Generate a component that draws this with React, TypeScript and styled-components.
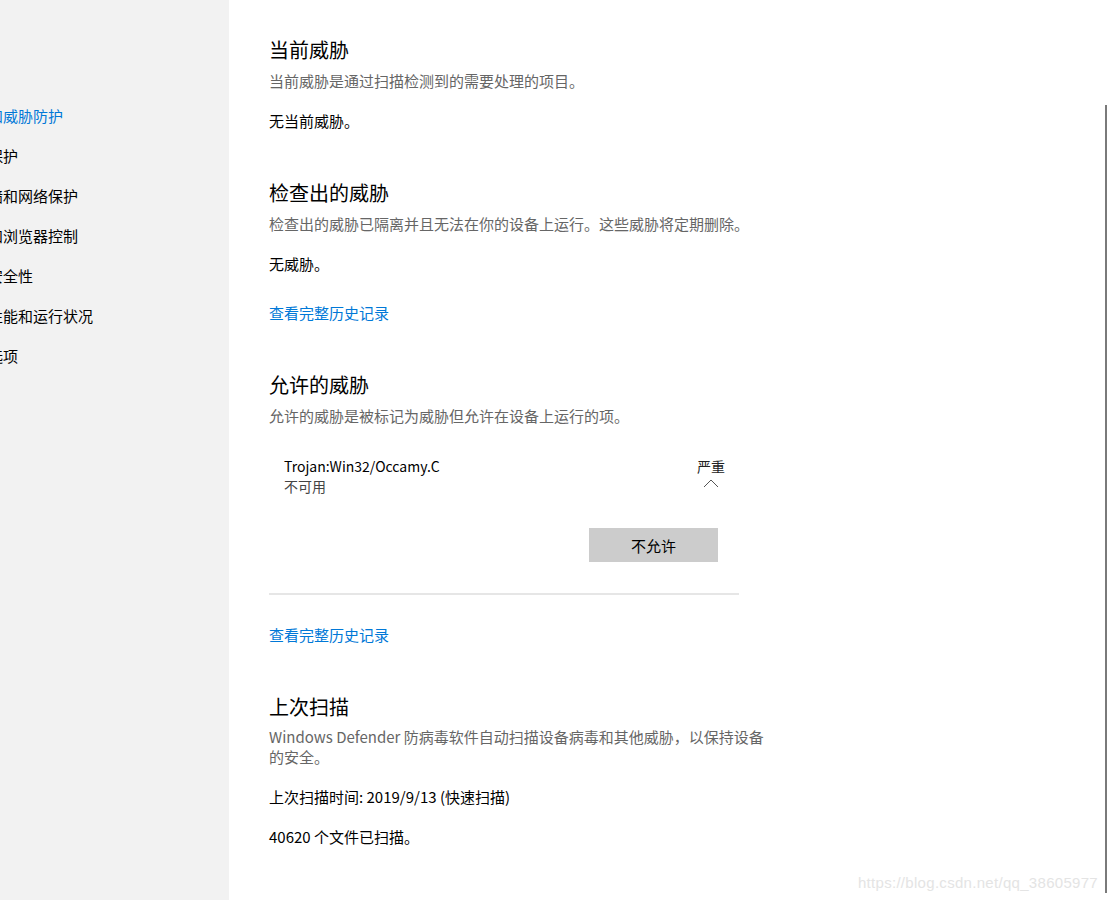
import React from 'react';
import styled, { createGlobalStyle } from 'styled-components';

const GlobalStyle = createGlobalStyle`
  html, body {
    margin: 0;
    padding: 0;
    background: #ffffff;
  }
  body {
    font-family: "Noto Sans CJK SC", "Noto Sans", sans-serif;
    color: #000;
  }
`;

const Page = styled.div`
  display: flex;
  height: 900px;
  overflow: hidden;
`;

// left nav is scrolled sideways in the shot, so labels run off the left edge
const Sidebar = styled.nav`
  width: 229px;
  flex-shrink: 0;
  background: #f2f2f2;
  padding-top: 106px;
  overflow: hidden;
  display: flex;
  flex-direction: column;
`;

const NavItem = styled.div<{ $active?: boolean }>`
  height: 40px;
  line-height: 20px;
  margin-left: -42px;
  white-space: nowrap;
  font-size: 15px;
  color: ${p => (p.$active ? '#0078d7' : '#000')};
`;

const Main = styled.main`
  position: relative;
  flex: 1;
  padding: 36px 0 0 40px;
`;

const Section = styled.section`
  display: flex;
  flex-direction: column;
  width: 500px;
  & + & {
    margin-top: 48px;
  }
`;

const Heading = styled.h2`
  margin: 0;
  font-size: 20px;
  line-height: 28px;
  font-weight: 400;
`;

const Desc = styled.p<{ $gap?: number }>`
  margin: ${p => p.$gap ?? 7}px 0 0;
  font-size: 15px;
  line-height: 20px;
  color: #666;
`;

const Body = styled.p<{ $gap?: number }>`
  margin: ${p => p.$gap ?? 20}px 0 0;
  font-size: 15px;
  line-height: 20px;
`;

const Link = styled.a<{ $gap?: number }>`
  margin-top: ${p => p.$gap ?? 29}px;
  font-size: 15px;
  line-height: 20px;
  color: #0078d7;
  text-decoration: none;
  align-self: flex-start;
  cursor: pointer;
`;

const ThreatCard = styled.div`
  width: 470px;
  margin-top: 30px;
  display: flex;
  flex-direction: column;
`;

const ThreatHeader = styled.div`
  display: flex;
  justify-content: space-between;
  padding: 0 14px 0 15px;
`;

const ThreatInfo = styled.div`
  display: flex;
  flex-direction: column;
`;

const ThreatName = styled.span`
  font-size: 14px;
  line-height: 20px;
  color: #000;
`;

const ThreatStatus = styled.span`
  font-size: 14px;
  line-height: 20px;
  color: #444;
`;

const Severity = styled.div`
  display: flex;
  flex-direction: column;
  align-items: center;
  font-size: 14px;
  line-height: 20px;
  color: #222;
`;

const Chevron = styled.svg`
  margin-top: 3px;
`;

const ButtonRow = styled.div`
  display: flex;
  justify-content: flex-end;
  padding-right: 21px;
  margin-top: 32px;
`;

const Button = styled.button`
  width: 129px;
  height: 34px;
  border: none;
  background: #cccccc;
  font-family: inherit;
  font-size: 15px;
  color: #000;
  cursor: pointer;
`;

const Separator = styled.hr`
  width: 470px;
  height: 2px;
  margin: 31px 0 0;
  border: none;
  background: #e6e6e6;
`;

const ScrollThumb = styled.div`
  position: absolute;
  top: 105px;
  right: 2px;
  width: 2px;
  height: 788px;
  background: #7a7a7a;
`;

const Watermark = styled.div`
  position: absolute;
  right: 11px;
  bottom: 9px;
  font-family: "Liberation Sans", Arial, sans-serif;
  font-size: 15px;
  color: #e4e4e4;
  letter-spacing: 0.3px;
`;

const navItems = [
  '病毒和威胁防护',
  '帐户保护',
  '防火墙和网络保护',
  '应用和浏览器控制',
  '设备安全性',
  '设备性能和运行状况',
  '家庭选项',
];

export default function App() {
  return (
    <>
      <GlobalStyle />
      <Page>
        <Sidebar>
          {navItems.map((item, i) => (
            <NavItem key={item} $active={i === 0}>
              {item}
            </NavItem>
          ))}
        </Sidebar>
        <Main>
          <Section>
            <Heading>当前威胁</Heading>
            <Desc>当前威胁是通过扫描检测到的需要处理的项目。</Desc>
            <Body>无当前威胁。</Body>
          </Section>

          <Section>
            <Heading>检查出的威胁</Heading>
            <Desc>检查出的威胁已隔离并且无法在你的设备上运行。这些威胁将定期删除。</Desc>
            <Body>无威胁。</Body>
            <Link>查看完整历史记录</Link>
          </Section>

          <Section>
            <Heading>允许的威胁</Heading>
            <Desc>允许的威胁是被标记为威胁但允许在设备上运行的项。</Desc>
            <ThreatCard>
              <ThreatHeader>
                <ThreatInfo>
                  <ThreatName>Trojan:Win32/Occamy.C</ThreatName>
                  <ThreatStatus>不可用</ThreatStatus>
                </ThreatInfo>
                <Severity>
                  严重
                  <Chevron width="16" height="9" viewBox="0 0 16 9">
                    <polyline points="1,8 8,1 15,8" fill="none" stroke="#555" strokeWidth="1" />
                  </Chevron>
                </Severity>
              </ThreatHeader>
              <ButtonRow>
                <Button>不允许</Button>
              </ButtonRow>
            </ThreatCard>
            <Separator />
            <Link $gap={30}>查看完整历史记录</Link>
          </Section>

          <Section>
            <Heading>上次扫描</Heading>
            <Desc $gap={6}>Windows Defender 防病毒软件自动扫描设备病毒和其他威胁，以保持设备的安全。</Desc>
            <Body>上次扫描时间: 2019/9/13 (快速扫描)</Body>
            <Body>40620 个文件已扫描。</Body>
          </Section>

          <ScrollThumb />
          <Watermark>https://blog.csdn.net/qq_38605977</Watermark>
        </Main>
      </Page>
    </>
  );
}
